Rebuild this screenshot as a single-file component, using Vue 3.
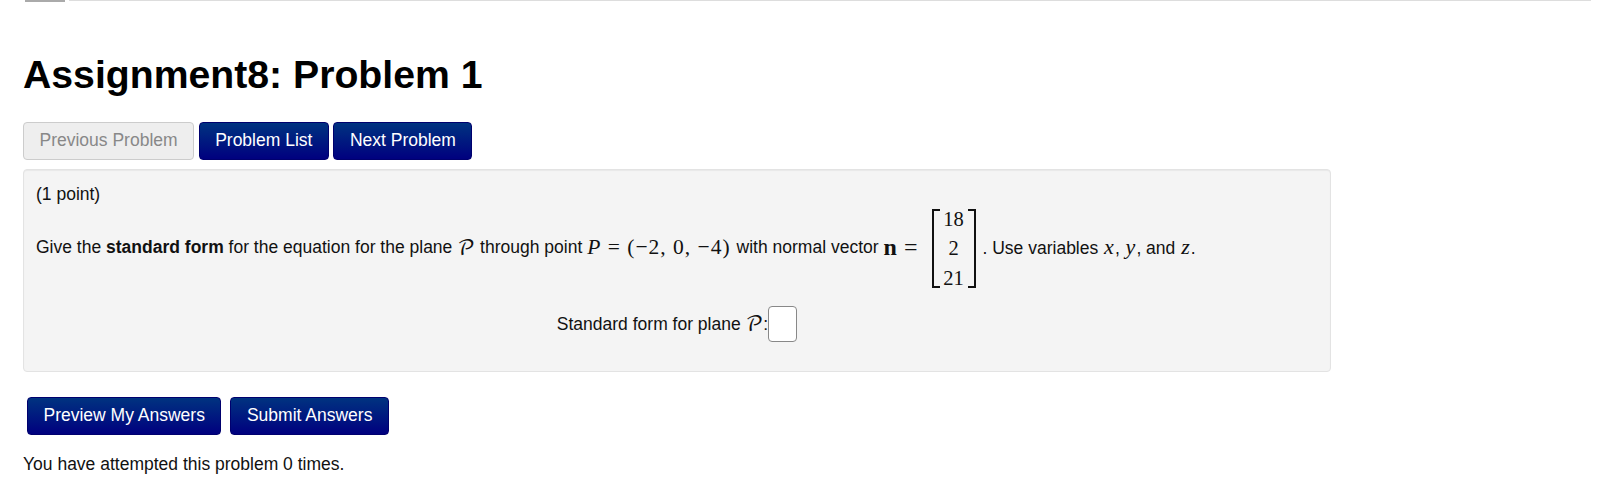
<script setup>
const matrix = [18, 2, 21];
</script>

<template>
  <div class="page">
    <div class="topbar">
      <span class="tab"></span>
      <span class="rule"></span>
    </div>

    <h1>Assignment8: Problem 1</h1>

    <div class="nav">
      <span class="btn disabled">Previous Problem</span>
      <a class="btn">Problem List</a>
      <a class="btn">Next Problem</a>
    </div>

    <div class="problem">
      <p class="points">(1 point)</p>
      <p class="question">
        <span>Give the <b>standard form</b> for the equation for the plane</span>
        <span class="math script">𝒫</span>
        <span>through point</span>
        <span class="math point"><i>P</i> = (−2, 0, −4)</span>
        <span>with normal vector</span>
        <span class="math normal"><b>n</b> =</span>
        <span class="matrix math">
          <span v-for="n in matrix" :key="n">{{ n }}</span>
        </span>
        <span class="after">. Use variables <i class="math var">x</i>, <i class="math var">y</i>, and <i class="math var">z</i>.</span>
      </p>
      <div class="answer">
        <label>Standard form for plane <span class="math script">𝒫</span>:</label>
        <input type="text" class="ans" />
      </div>
    </div>

    <div class="actions">
      <a class="btn">Preview My Answers</a>
      <a class="btn">Submit Answers</a>
    </div>

    <p class="attempts">You have attempted this problem 0 times.</p>
  </div>
</template>

<style scoped>
.page { height: 480px; overflow: hidden; box-sizing: border-box; font-family: "Liberation Sans", Arial, sans-serif; font-size: 17.5px; color: #111; background: #fff; }
.topbar { display: flex; height: 2px; padding-left: 25px; gap: 4px; }
.tab { width: 40px; height: 2px; background: #aaa; }
.rule { width: 1522px; height: 1px; background: #ddd; }
h1 { margin: 48px 0 0 23px; font-size: 39.2px; line-height: 50px; font-weight: 700; color: #000; }
.nav { display: flex; gap: 4.5px; margin: 22px 0 0 23px; }
.btn { display: inline-flex; align-items: center; box-sizing: border-box; height: 38px; padding: 0 15.5px 2px; border: 1px solid #00006e; border-radius: 4px; background: linear-gradient(#003380, #00007f); color: #fff; font-size: 17.5px; white-space: nowrap; }
.btn.disabled { background: #eee; border-color: #ccc; color: #888; }
.problem { box-sizing: border-box; width: 1308px; height: 203px; margin: 9px 0 0 23px; padding: 14px 12px; background: #f4f4f4; border: 1px solid #e3e3e3; border-radius: 4px; box-shadow: inset 0 1px 1px rgba(0, 0, 0, 0.05); }
.points { margin: 0; line-height: 20px; }
.question { display: flex; align-items: center; gap: 5px; margin: -3px 0 0; height: 92px; white-space: pre; }
.math { font-family: "Liberation Serif", "DejaVu Serif", serif; font-size: 21.5px; }
.script { font-family: "DejaVu Math TeX Gyre", "DejaVu Serif", serif; font-size: 21px; }
.point { margin: 0 1px 0 0; letter-spacing: 1px; word-spacing: 0; }
.normal { font-size: 24px; word-spacing: 1px; }
.matrix { display: flex; flex-direction: column; align-items: center; justify-content: space-between; box-sizing: border-box; width: 44px; height: 79px; margin: 2px 0 0 9px; border-left: 2px solid #111; border-right: 2px solid #111; position: relative; font-size: 20.5px; line-height: 20px; }
.matrix::before, .matrix::after { content: ""; position: absolute; top: 0; bottom: 0; width: 6px; border-top: 2px solid #111; border-bottom: 2px solid #111; }
.matrix::before { left: 0; }
.matrix::after { right: 0; }
.after { margin-left: 2px; }
.var { padding: 0 1px; font-size: 22px; }
.answer { display: flex; align-items: center; justify-content: center; height: 36px; margin-top: 13px; }
.answer label { padding-bottom: 2px; }
.ans { box-sizing: border-box; width: 29px; height: 36px; padding: 0; border: 1px solid #888; border-radius: 4px; background: #fff; }
.actions { display: flex; gap: 9px; margin: 25px 0 0 27px; }
.attempts { margin: 19px 0 0 23px; line-height: 20px; }
</style>
